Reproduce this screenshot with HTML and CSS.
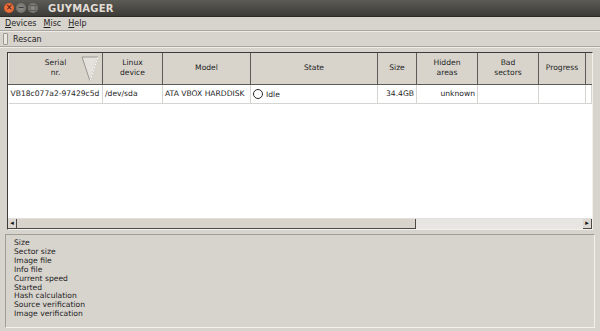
FILE: index.html
```html
<!DOCTYPE html>
<html lang="en">
<head>
  <meta charset="UTF-8" />
  <title>GUYMAGER</title>
  <link rel="stylesheet" href="styles.css">
</head>
<body>
  <div class="window">
    <div class="titlebar">
      <span class="wbtn close">&times;</span>
      <span class="wbtn">&minus;</span>
      <span class="wbtn">&#9633;</span>
      <span class="title">GUYMAGER</span>
    </div>

    <div class="menubar">
      <span><u>D</u>evices</span>
      <span><u>M</u>isc</span>
      <span><u>H</u>elp</span>
    </div>

    <div class="toolbar">
      <span class="grip"></span>
      <span>Rescan</span>
    </div>

    <div class="main">
      <div class="frame">
        <div class="viewport">
          <table class="devices">
            <thead>
              <tr>
                <th class="c1">Serial<br>nr.
                  <svg class="sort" width="18" height="26" viewBox="0 0 18 26">
                    <polygon points="1,1 17,1 9,25" fill="#e4e1dc" stroke="#9a9792" stroke-width="1"/>
                    <polyline points="9,25 17,1" fill="none" stroke="#f6f5f2" stroke-width="1"/>
                  </svg>
                </th>
                <th class="c2">Linux<br>device</th>
                <th class="c3">Model</th>
                <th class="c4">State</th>
                <th class="c5">Size</th>
                <th class="c6">Hidden<br>areas</th>
                <th class="c7">Bad<br>sectors</th>
                <th class="c8">Progress</th>
                <th class="filler"></th>
              </tr>
            </thead>
            <tbody>
              <tr>
                <td>VB18c077a2-97429c5d</td>
                <td>/dev/sda</td>
                <td>ATA VBOX HARDDISK</td>
                <td><span class="led"></span>Idle</td>
                <td class="num">34.4GB</td>
                <td class="num">unknown</td>
                <td></td>
                <td></td>
                <td class="filler"></td>
              </tr>
            </tbody>
          </table>
        </div>
        <div class="hscroll">
          <span class="arrow">&#9666;</span>
          <span class="thumb"></span>
          <span class="trough"></span>
          <span class="arrow">&#9656;</span>
        </div>
      </div>

      <div class="info">
        <div>Size</div>
        <div>Sector size</div>
        <div>Image file</div>
        <div>Info file</div>
        <div>Current speed</div>
        <div>Started</div>
        <div>Hash calculation</div>
        <div>Source verification</div>
        <div>Image verification</div>
      </div>
    </div>
  </div>
</body>
</html>
```

FILE: styles.css
```css
body {
  margin: 0;
  padding: 0;
  font-family: "DejaVu Sans", sans-serif;
  font-size: 7.6px;
  color: #1e1e1e;
  background: #d7d3cd;
}
.window {
  width: 600px;
  height: 331px;
  overflow: hidden;
  display: flex;
  flex-direction: column;
}
.titlebar {
  height: 17px;
  display: flex;
  align-items: center;
  gap: 2px;
  padding-left: 4px;
  background: linear-gradient(#5c5b55, #3c3b37);
  border-bottom: 1px solid #2c2b28;
  box-sizing: border-box;
}
.wbtn {
  width: 10px;
  height: 10px;
  border-radius: 50%;
  background: radial-gradient(#8e8c86, #6a6964);
  color: #403f3b;
  font-size: 8px;
  line-height: 10px;
  text-align: center;
  font-weight: bold;
}
.wbtn.close {
  background: radial-gradient(#f4875a, #e0501a);
  color: #5a2210;
}
.title {
  margin-left: 8px;
  color: #e0ddd6;
  font-weight: bold;
  font-size: 10px;
  letter-spacing: 0.2px;
}
.menubar {
  height: 13px;
  display: flex;
  align-items: center;
  gap: 7px;
  padding-left: 5px;
  font-size: 8px;
  border-bottom: 1px solid #a9a59f;
}
.menubar u {
  text-decoration-thickness: 1px;
}
.toolbar {
  height: 14px;
  display: flex;
  align-items: center;
  gap: 5px;
  padding-left: 3px;
  border-top: 1px solid #eeebe6;
  border-bottom: 1px solid #a9a59f;
  font-size: 8px;
}
.grip {
  width: 3px;
  height: 10px;
  border: 1px solid #9c9892;
  border-radius: 1px;
  background: #ebe8e3;
}
.main {
  flex: 1;
  display: flex;
  flex-direction: column;
  padding: 4px 5px 3px 5px;
  border-top: 1px solid #f0ede8;
  gap: 4px;
}
.frame {
  height: 176px;
  margin: 0 2px;
  border: 1px solid #3d3c3a;
  border-right-color: #f2f0ec;
  border-bottom-color: #f2f0ec;
  display: flex;
  flex-direction: column;
  background: #fff;
}
.viewport {
  flex: 1;
  overflow: hidden;
}
.devices {
  border-collapse: collapse;
  table-layout: fixed;
  width: 100%;
}
.devices th {
  height: 31px;
  box-sizing: border-box;
  background: #d8d4cc;
  font-weight: normal;
  text-align: center;
  line-height: 10px;
  padding: 0;
  border-right: 1px solid #5c5b58;
  border-left: 1px solid #efede8;
  border-bottom: 1px solid #5c5b58;
  position: relative;
}
.devices th.filler {
  border-right: none;
}
.devices td {
  height: 19px;
  box-sizing: border-box;
  padding: 0 2px;
  border-right: 1px solid #d6d4d0;
  border-bottom: 1px solid #d6d4d0;
  white-space: nowrap;
  overflow: hidden;
}
.devices td.num {
  text-align: right;
}
.c1 { width: 94px; }
.c2 { width: 60px; }
.c3 { width: 88px; }
.c4 { width: 127px; }
.c5 { width: 39px; }
.c6 { width: 61px; }
.c7 { width: 61px; }
.c8 { width: 47px; }
.sort {
  position: absolute;
  right: 3px;
  top: 3px;
}
.led {
  display: inline-block;
  width: 8px;
  height: 8px;
  border: 1px solid #2a2a2a;
  border-radius: 50%;
  vertical-align: -2px;
  margin-right: 3px;
}
.hscroll {
  height: 10px;
  display: flex;
  background: #e8e6e2;
  border-top: 1px solid #e2dfda;
}
.hscroll .arrow {
  width: 8px;
  font-size: 7px;
  line-height: 9px;
  text-align: center;
  background: #dcd8d1;
  border-right: 1px solid #4a4946;
  border-bottom: 1px solid #4a4946;
  color: #111;
}
.hscroll .thumb {
  width: 398px;
  background: #d8d4cc;
  border-right: 1px solid #4a4946;
  border-bottom: 1px solid #4a4946;
}
.hscroll .trough {
  flex: 1;
}
.info {
  flex: 1;
  padding: 4px 8px;
  border: 1px solid #a19d97;
  border-right-color: #f3f1ec;
  border-bottom-color: #f3f1ec;
  line-height: 8.9px;
  background: #d7d3cd;
}
```
